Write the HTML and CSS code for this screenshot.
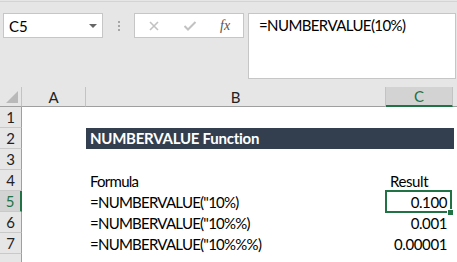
FILE: index.html
```html
<!DOCTYPE html>
<html lang="en">
<head>
  <meta charset="UTF-8" />
  <title>NUMBERVALUE Function</title>
  <link rel="stylesheet" href="styles.css">
</head>
<body>

  <!-- Barra de formulas -->
  <div class="toolbar">
    <div class="name-box">
      <span>C5</span>
      <span class="arrow"></span>
    </div>
    <div class="dots"><i></i><i></i><i></i></div>
    <div class="icon-box">
      <svg class="ico" width="12" height="12" viewBox="0 0 12 12">
        <path d="M2 2 L10 10 M10 2 L2 10" stroke="#c2c2c2" stroke-width="1.6" fill="none" />
      </svg>
      <svg class="ico" width="14" height="12" viewBox="0 0 14 12">
        <path d="M1.5 6 L5 9.5 L12.5 2" stroke="#c2c2c2" stroke-width="2" fill="none" />
      </svg>
      <span class="fx">fx</span>
    </div>
    <div class="formula-box">=NUMBERVALUE(10%)</div>
  </div>

  <!-- Hoja -->
  <div class="sheet">
    <div class="hd corner"><span class="tri"></span></div>
    <div class="hd col">A</div>
    <div class="hd col">B</div>
    <div class="hd col sel-col">C</div>
    <div class="hd col last"></div>

    <div class="hd row">1</div>
    <div class="cell"></div><div class="cell"></div><div class="cell"></div><div class="cell"></div>

    <div class="hd row">2</div>
    <div class="cell"></div>
    <div class="cell title">NUMBERVALUE Function</div>
    <div class="cell"></div>

    <div class="hd row">3</div>
    <div class="cell"></div><div class="cell"></div><div class="cell"></div><div class="cell"></div>

    <div class="hd row">4</div>
    <div class="cell"></div>
    <div class="cell">Formula</div>
    <div class="cell right">Result</div>
    <div class="cell"></div>

    <div class="hd row sel-row">5</div>
    <div class="cell"></div>
    <div class="cell">=NUMBERVALUE("10%)</div>
    <div class="cell num active">0.100</div>
    <div class="cell"></div>

    <div class="hd row">6</div>
    <div class="cell"></div>
    <div class="cell">=NUMBERVALUE("10%%)</div>
    <div class="cell num">0.001</div>
    <div class="cell"></div>

    <div class="hd row">7</div>
    <div class="cell"></div>
    <div class="cell">=NUMBERVALUE("10%%%)</div>
    <div class="cell num">0.00001</div>
    <div class="cell"></div>

    <!-- fila 8 apenas asoma -->
    <div class="hd row"></div>
    <div class="cell"></div><div class="cell"></div><div class="cell"></div><div class="cell"></div>
  </div>

</body>
</html>
```

FILE: styles.css
```css
/* ----------------- Base ----------------- */
body {
  margin: 0;
  width: 457px;
  height: 262px;
  overflow: hidden;
  background: #e6e6e6;
  font-family: 'Lato', 'Liberation Sans', sans-serif;
  font-size: 15px;
  color: #000;
}

/* ----------------- Barra de formulas ----------------- */
.toolbar {
  display: flex;
  align-items: flex-start;
  height: 86px;
  padding: 11px 0 0 3px;
  box-sizing: border-box;
  border-top: 1px solid #d4d4d4;
  margin-top: 1px;
}

.name-box {
  width: 100px;
  height: 25px;
  box-sizing: border-box;
  background: #fff;
  border: 1px solid #c6c6c6;
  display: flex;
  align-items: center;
  justify-content: space-between;
  padding: 0 5px 0 5px;
}

.arrow {
  width: 0;
  height: 0;
  border-left: 4px solid transparent;
  border-right: 4px solid transparent;
  border-top: 4px solid #666;
}

.dots {
  width: 31px;
  height: 25px;
  display: flex;
  flex-direction: column;
  align-items: center;
  justify-content: center;
  gap: 2px;
}
.dots i {
  width: 2px;
  height: 2px;
  background: #a6a6a6;
}

.icon-box {
  width: 110px;
  height: 25px;
  box-sizing: border-box;
  background: #fff;
  border: 1px solid #c6c6c6;
  display: flex;
  align-items: center;
  padding-left: 13px;
  gap: 23px;
}

.fx {
  font-family: 'Liberation Serif', serif;
  font-style: italic;
  font-size: 14px;
  color: #555;
}

.formula-box {
  width: 208px;
  height: 66px;
  box-sizing: border-box;
  margin-left: 4px;
  background: #fff;
  border: 1px solid #c6c6c6;
  padding: 2px 0 0 10px;
  letter-spacing: -0.6px;
}

/* ----------------- Hoja ----------------- */
.sheet {
  display: grid;
  grid-template-columns: 22px 64px 300px 67px 4px;
  grid-template-rows: 20px repeat(8, 21px);
  background: #fff;
}

.hd {
  background: #e6e6e6;
  color: #222;
  display: flex;
  align-items: center;
  justify-content: center;
  box-sizing: border-box;
}

.col {
  border-right: 1px solid #c3c3c3;
  border-bottom: 1px solid #9f9f9f;
}
.col.last {
  border-right: none;
}

.corner {
  border-right: 1px solid #c3c3c3;
  border-bottom: 1px solid #9f9f9f;
  position: relative;
}
.tri {
  position: absolute;
  right: 3px;
  bottom: 3px;
  width: 0;
  height: 0;
  border-left: 12px solid transparent;
  border-bottom: 12px solid #b9b9b9;
}

.row {
  border-right: 1px solid #9f9f9f;
  border-bottom: 1px solid #c9c9c9;
}

.sel-col {
  background: #d3d3d3;
  color: #217346;
  border-bottom: 2px solid #217346;
}
.sel-row {
  background: #d3d3d3;
  color: #217346;
  border-right: 2px solid #217346;
}

.cell {
  display: flex;
  align-items: flex-end;
  padding: 0 4px 1px 4px;
  white-space: nowrap;
  position: relative;
  letter-spacing: -0.75px;
}

.title {
  grid-column: span 2;
  background: #333f4f;
  color: #fff;
  font-weight: bold;
  font-size: 15px;
  letter-spacing: -0.25px;
  align-items: center;
  padding-left: 4px;
  margin-right: -1px;
}

.right {
  justify-content: flex-start;
  letter-spacing: -0.4px;
}

.num {
  justify-content: flex-end;
  padding-right: 6px;
  letter-spacing: -0.4px;
}

.active::after {
  content: "";
  position: absolute;
  left: -1px;
  top: -1px;
  right: 1px;
  bottom: -1px;
  border: 2px solid #217346;
}
.active::before {
  content: "";
  position: absolute;
  right: -1px;
  bottom: -4px;
  width: 5px;
  height: 5px;
  background: #217346;
  border: 1px solid #fff;
  z-index: 1;
}
```
